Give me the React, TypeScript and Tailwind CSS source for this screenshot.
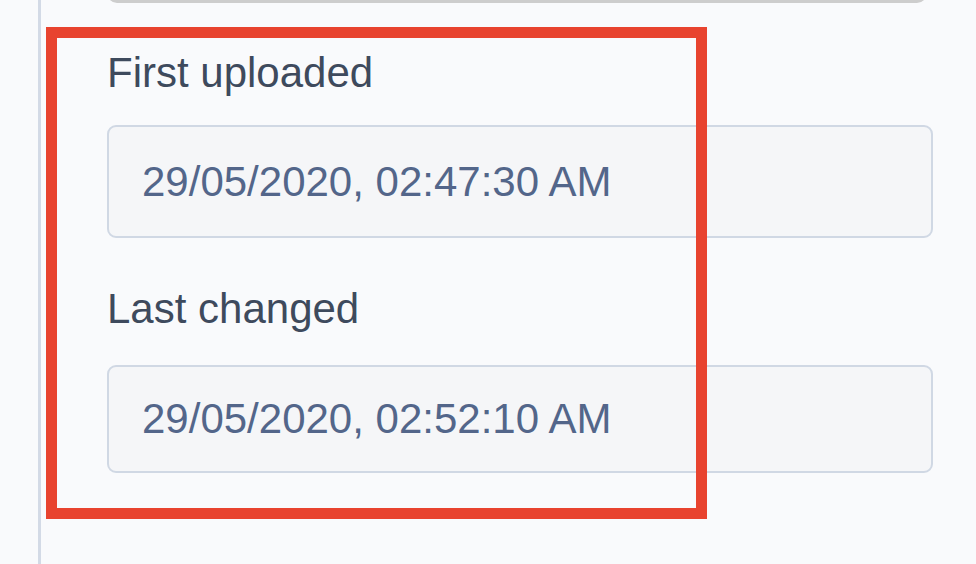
import React from "react";

const font = { fontFamily: '"Liberation Sans", Arial, Helvetica, sans-serif' };

function Field({ label, value, labelMt, inputMt, h }: { label: string; value: string; labelMt: string; inputMt: string; h: string }) {
  return (
    <div className="flex flex-col">
      <div className={`${labelMt} text-[42px] leading-[48px] text-[#3e4a5d]`}>{label}</div>
      <div
        className={`${inputMt} ${h} flex items-center rounded-[9px] border-2 border-[#d0d8e4] bg-[#f5f6f8] pl-[33px] text-[42px] leading-[48px] text-[#53668a]`}
      >
        {value}
      </div>
    </div>
  );
}

export default function App() {
  return (
    <div className="relative flex h-[564px] w-[976px] overflow-hidden bg-[#f9fafc]" style={font}>
      <div className="ml-[38px] flex h-full flex-1 flex-col border-l-[3px] border-[#d3dae6] pl-[66px] pr-[43px]">
        <div className="mt-[-60px] mr-[6px] h-[63px] rounded-[10px] border-[3px] border-[#cdcdcd] bg-[#f6f6f7]" />
        <Field label="First uploaded" value="29/05/2020, 02:47:30 AM" labelMt="mt-[46px]" inputMt="mt-[28px]" h="h-[113px]" />
        <Field label="Last changed" value="29/05/2020, 02:52:10 AM" labelMt="mt-[47px]" inputMt="mt-[32px]" h="h-[108px]" />
      </div>
      <div className="pointer-events-none absolute left-[46px] top-[27px] h-[492px] w-[661px] border-[11px] border-[#e8432f]" />
    </div>
  );
}
